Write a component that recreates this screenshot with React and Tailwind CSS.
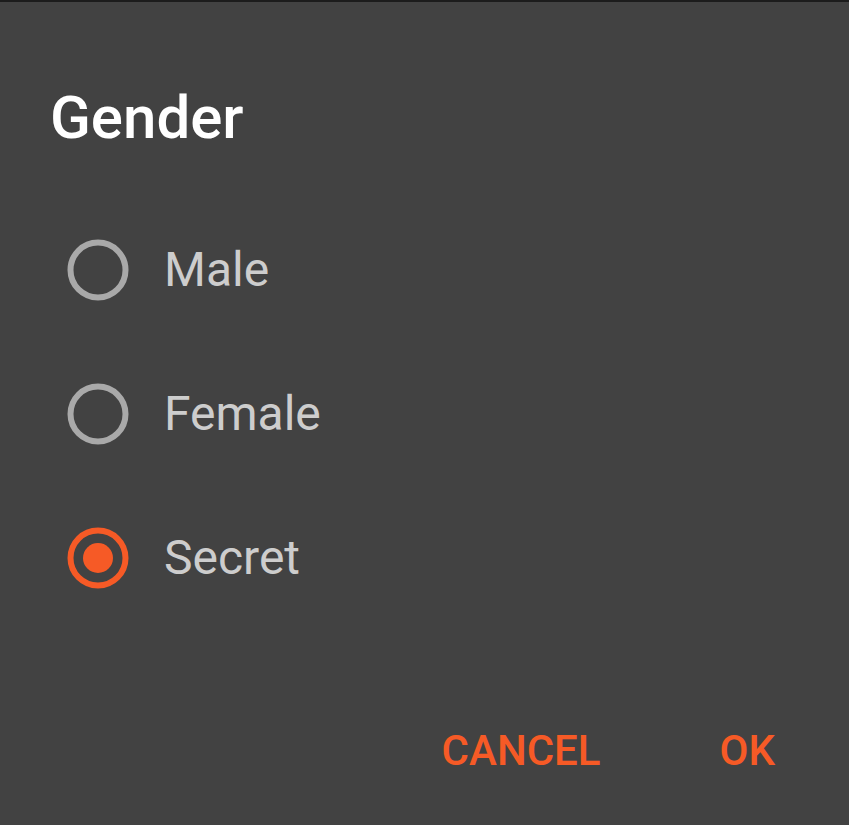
import React from "react";

function Radio({ checked }) {
  const c = checked ? "#f65a26" : "#a9a9a9";
  return (
    <svg width="62" height="62" viewBox="0 0 62 62" className="shrink-0">
      <circle cx="31" cy="31" r="27.5" fill="none" stroke={c} strokeWidth="6" />
      {checked && <circle cx="31" cy="31" r="15" fill={c} />}
    </svg>
  );
}

export default function App() {
  const items = [
    { label: "Male", checked: false },
    { label: "Female", checked: false },
    { label: "Secret", checked: true },
  ];
  return (
    <div
      className="w-[849px] h-[825px] bg-[#424242] flex flex-col border-t-2 border-[#1c1c1c]"
      style={{ fontFamily: "Roboto, 'Liberation Sans', sans-serif" }}
    >
      <div className="pt-[81px] pl-[50px] text-[60px] leading-[70px] font-medium text-white">
        Gender
      </div>
      <div className="mt-[45px] flex flex-col">
        {items.map((it) => (
          <div key={it.label} className="h-[144px] flex items-center pl-[67px]">
            <Radio checked={it.checked} />
            <span className="ml-[35px] text-[48px] leading-[144px] text-[#cdcdcd]">
              {it.label}
            </span>
          </div>
        ))}
      </div>
      <div className="mt-[66px] h-[108px] flex items-center justify-end pr-[74px] gap-[119px] text-[42px] font-medium text-[#f65a26]">
        <span>CANCEL</span>
        <span>OK</span>
      </div>
    </div>
  );
}
